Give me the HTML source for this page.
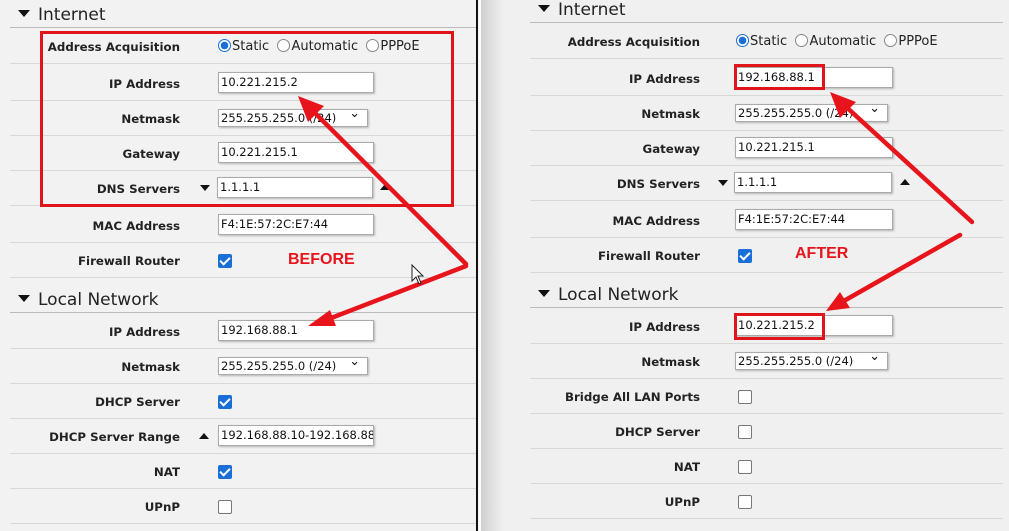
<!DOCTYPE html>
<html><head><style>
*{margin:0;padding:0;box-sizing:border-box}
body{width:1009px;height:531px;position:relative;overflow:hidden;background:#f2f2f2;font-family:"DejaVu Sans",sans-serif}
.a{position:absolute}
.lb{position:absolute;font:bold 11.8px "DejaVu Sans",sans-serif;color:#222;text-align:right;width:180px;line-height:14px}
.ln{position:absolute;height:1px;background:#d8d8d8}
.hd{position:absolute;font:17px "DejaVu Sans",sans-serif;color:#222;line-height:20px}
.hd:before{content:"";display:inline-block;width:0;height:0;border-left:6px solid transparent;border-right:6px solid transparent;border-top:7px solid #111;margin-right:8px;vertical-align:3px}
.hl{position:absolute;height:1px;background:#bbb}
.in{position:absolute;height:21px;background:#fff;border:1px solid #aaa;box-shadow:1px 1px 2px rgba(0,0,0,.25);font:11.5px "DejaVu Sans",sans-serif;line-height:19px;padding-left:2px;color:#111;overflow:hidden;white-space:nowrap}
.sel:after{content:"⌄";position:absolute;right:7px;top:-4px;font-size:13px}
.cb{position:absolute;width:14px;height:14px;border-radius:2px;background:#1a6fd6;}
.cb:after{content:"";position:absolute;left:4px;top:1px;width:4px;height:8px;border:solid #fff;border-width:0 2px 2px 0;transform:rotate(45deg)}
.cu{position:absolute;width:14px;height:14px;border-radius:2px;border:1.5px solid #777;background:#fff}
.rd{position:absolute;font:13px "DejaVu Sans",sans-serif;color:#222;line-height:15px;white-space:nowrap}
.ro,.rf{display:inline-block;width:13px;height:13px;border-radius:50%;border:1px solid #888;vertical-align:-2px;margin-right:1px;background:#fff}
.rf{border:1.5px solid #1a6fd6;background:radial-gradient(#1a6fd6 0 3.5px,#fff 4px)}
.tu,.td{position:absolute;width:0;height:0;border-left:5px solid transparent;border-right:5px solid transparent}
.td{border-top:6px solid #111}.tu{border-bottom:6px solid #111}
.rb{position:absolute;border:3px solid #e0141b}
.tx{position:absolute;font:bold 16px "Liberation Sans",sans-serif;color:#e8141b}
</style></head><body>
<div class="a" style="left:476px;top:0;width:2px;height:531px;background:#111"></div>
<div class="a" style="left:478px;top:0;width:3px;height:531px;background:#fafafa"></div>
<div class="a" style="left:481px;top:0;width:22px;height:531px;background:linear-gradient(90deg,#cfcfcf,#f0f0f0)"></div>
<div class="a" style="left:503px;top:0;width:506px;height:531px;background:#f0f0f0"></div>

<!-- LEFT -->
<div class="hd" style="left:18px;top:5px">Internet</div>
<div class="hl" style="left:10px;top:27px;width:466px"></div>
<div class="lb" style="left:0;top:40px">Address Acquisition</div>
<div class="rd" style="left:218px;top:39px"><span class="rf"></span>Static &nbsp;<span class="ro"></span>Automatic &nbsp;<span class="ro"></span>PPPoE</div>
<div class="ln" style="left:10px;top:63px;width:466px"></div>
<div class="lb" style="left:0;top:77px">IP Address</div>
<div class="in" style="left:218px;top:72px;width:156px">10.221.215.2</div>
<div class="ln" style="left:10px;top:100px;width:466px"></div>
<div class="lb" style="left:0;top:112px">Netmask</div>
<div class="in sel" style="left:218px;top:109px;width:150px;height:18px;line-height:16px">255.255.255.0 (/24)</div>
<div class="ln" style="left:10px;top:135px;width:466px"></div>
<div class="lb" style="left:0;top:147px">Gateway</div>
<div class="in" style="left:218px;top:142px;width:156px">10.221.215.1</div>
<div class="ln" style="left:10px;top:170px;width:466px"></div>
<div class="lb" style="left:0;top:182px">DNS Servers</div>
<div class="td" style="left:200px;top:185px"></div>
<div class="in" style="left:217px;top:177px;width:156px">1.1.1.1</div>
<div class="tu" style="left:380px;top:184px"></div>
<div class="ln" style="left:10px;top:205px;width:466px"></div>
<div class="lb" style="left:0;top:219px">MAC Address</div>
<div class="in" style="left:218px;top:214px;width:156px">F4:1E:57:2C:E7:44</div>
<div class="ln" style="left:10px;top:242px;width:466px"></div>
<div class="lb" style="left:0;top:254px">Firewall Router</div>
<div class="cb" style="left:218px;top:254px"></div>
<div class="tx" style="left:288px;top:251px">BEFORE</div>
<div class="ln" style="left:10px;top:277px;width:466px"></div>
<div class="hd" style="left:18px;top:290px">Local Network</div>
<div class="hl" style="left:10px;top:312px;width:466px"></div>
<div class="lb" style="left:0;top:325px">IP Address</div>
<div class="in" style="left:218px;top:320px;width:156px">192.168.88.1</div>
<div class="ln" style="left:10px;top:348px;width:466px"></div>
<div class="lb" style="left:0;top:360px">Netmask</div>
<div class="in sel" style="left:218px;top:357px;width:150px;height:18px;line-height:16px">255.255.255.0 (/24)</div>
<div class="ln" style="left:10px;top:383px;width:466px"></div>
<div class="lb" style="left:0;top:395px">DHCP Server</div>
<div class="cb" style="left:218px;top:395px"></div>
<div class="ln" style="left:10px;top:418px;width:466px"></div>
<div class="lb" style="left:0;top:430px">DHCP Server Range</div>
<div class="tu" style="left:199px;top:433px"></div>
<div class="in" style="left:218px;top:425px;width:156px">192.168.88.10-192.168.88</div>
<div class="ln" style="left:10px;top:453px;width:466px"></div>
<div class="lb" style="left:0;top:465px">NAT</div>
<div class="cb" style="left:218px;top:465px"></div>
<div class="ln" style="left:10px;top:488px;width:466px"></div>
<div class="lb" style="left:0;top:500px">UPnP</div>
<div class="cu" style="left:218px;top:500px"></div>
<div class="ln" style="left:10px;top:523px;width:466px"></div>
<div class="rb" style="left:40px;top:31px;width:414px;height:176px"></div>

<!-- RIGHT -->
<div class="hd" style="left:538px;top:0px">Internet</div>
<div class="hl" style="left:530px;top:22px;width:473px"></div>
<div class="lb" style="left:520px;top:35px">Address Acquisition</div>
<div class="rd" style="left:736px;top:34px"><span class="rf"></span>Static &nbsp;<span class="ro"></span>Automatic &nbsp;<span class="ro"></span>PPPoE</div>
<div class="ln" style="left:530px;top:58px;width:473px"></div>
<div class="lb" style="left:520px;top:72px">IP Address</div>
<div class="in" style="left:735px;top:67px;width:158px">192.168.88.1</div>
<div class="ln" style="left:530px;top:95px;width:473px"></div>
<div class="lb" style="left:520px;top:107px">Netmask</div>
<div class="in sel" style="left:735px;top:104px;width:153px;height:18px;line-height:16px">255.255.255.0 (/24)</div>
<div class="ln" style="left:530px;top:130px;width:473px"></div>
<div class="lb" style="left:520px;top:142px">Gateway</div>
<div class="in" style="left:735px;top:137px;width:158px">10.221.215.1</div>
<div class="ln" style="left:530px;top:165px;width:473px"></div>
<div class="lb" style="left:520px;top:177px">DNS Servers</div>
<div class="td" style="left:718px;top:180px"></div>
<div class="in" style="left:734px;top:172px;width:158px">1.1.1.1</div>
<div class="tu" style="left:900px;top:179px"></div>
<div class="ln" style="left:530px;top:200px;width:473px"></div>
<div class="lb" style="left:520px;top:214px">MAC Address</div>
<div class="in" style="left:735px;top:209px;width:158px">F4:1E:57:2C:E7:44</div>
<div class="ln" style="left:530px;top:237px;width:473px"></div>
<div class="lb" style="left:520px;top:249px">Firewall Router</div>
<div class="cb" style="left:738px;top:249px"></div>
<div class="tx" style="left:795px;top:245px">AFTER</div>
<div class="ln" style="left:530px;top:272px;width:473px"></div>
<div class="hd" style="left:538px;top:285px">Local Network</div>
<div class="hl" style="left:530px;top:307px;width:473px"></div>
<div class="lb" style="left:520px;top:320px">IP Address</div>
<div class="in" style="left:735px;top:315px;width:158px">10.221.215.2</div>
<div class="ln" style="left:530px;top:343px;width:473px"></div>
<div class="lb" style="left:520px;top:355px">Netmask</div>
<div class="in sel" style="left:735px;top:352px;width:153px;height:18px;line-height:16px">255.255.255.0 (/24)</div>
<div class="ln" style="left:530px;top:378px;width:473px"></div>
<div class="lb" style="left:520px;top:390px">Bridge All LAN Ports</div>
<div class="cu" style="left:738px;top:390px"></div>
<div class="ln" style="left:530px;top:413px;width:473px"></div>
<div class="lb" style="left:520px;top:425px">DHCP Server</div>
<div class="cu" style="left:738px;top:425px"></div>
<div class="ln" style="left:530px;top:448px;width:473px"></div>
<div class="lb" style="left:520px;top:460px">NAT</div>
<div class="cu" style="left:738px;top:460px"></div>
<div class="ln" style="left:530px;top:483px;width:473px"></div>
<div class="lb" style="left:520px;top:495px">UPnP</div>
<div class="cu" style="left:738px;top:495px"></div>
<div class="ln" style="left:530px;top:518px;width:473px"></div>
<div class="rb" style="left:734px;top:64px;width:91px;height:26px"></div>
<div class="rb" style="left:734px;top:313px;width:91px;height:27px"></div>

<svg class="a" style="left:0;top:0" width="1009" height="531">
<g stroke="#e8141b" stroke-width="4.5" fill="#e8141b" stroke-linecap="round">
<line x1="466" y1="264" x2="312" y2="110"/>
<polygon points="298,96 324,106 308,122" stroke="none"/>
<line x1="466" y1="266" x2="326" y2="320"/>
<polygon points="308,326 330,310 336,326" stroke="none"/>
<line x1="972" y1="222" x2="843" y2="104"/>
<polygon points="830,92 856,102 840,118" stroke="none"/>
<line x1="960" y1="235" x2="842" y2="302"/>
<polygon points="826,311 840,292 850,308" stroke="none"/>
</g>
<path d="M412 265 L412 281 L416 277 L419 284 L421 283 L418 276 L423 276 Z" fill="#fff" stroke="#222" stroke-width="1"/>
</svg>
</body></html>
